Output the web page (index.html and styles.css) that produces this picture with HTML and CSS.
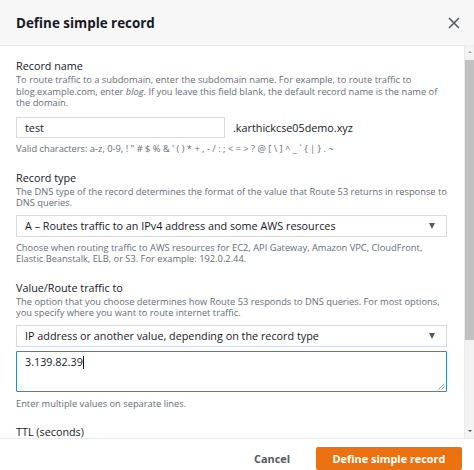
FILE: index.html
```html
<!DOCTYPE html>
<html lang="en">
<head>
    <meta charset="UTF-8">
    <title>Define simple record</title>
    <link rel="stylesheet" href="styles.css">
</head>
<body>
    <div class="modal">
        <div class="modal-header">
            <h2>Define simple record</h2>
            <span class="close">
                <svg width="12" height="12" viewBox="0 0 12 12"><path d="M1 1 L11 11 M11 1 L1 11" stroke="#545b64" stroke-width="1.6" fill="none"/></svg>
            </span>
        </div>

        <div class="modal-body">
            <div class="content">
                <div class="field">
                    <div class="label">Record name</div>
                    <div class="desc">To route traffic to a subdomain, enter the subdomain name. For example, to route traffic to blog.example.com, enter <i>blog</i>. If you leave this field blank, the default record name is the name of the domain.</div>
                    <div class="name-row">
                        <div class="input">test</div>
                        <span class="suffix">.karthickcse05demo.xyz</span>
                    </div>
                    <div class="hint">Valid characters: a-z, 0-9, ! " # $ % &amp; ' ( ) * + , - / : ; &lt; = &gt; ? @ [ \ ] ^ _ ` { | } . ~</div>
                </div>

                <div class="field">
                    <div class="label">Record type</div>
                    <div class="desc">The DNS type of the record determines the format of the value that Route 53 returns in response to DNS queries.</div>
                    <div class="select">
                        <span>A – Routes traffic to an IPv4 address and some AWS resources</span>
                        <span class="caret"></span>
                    </div>
                    <div class="hint">Choose when routing traffic to AWS resources for EC2, API Gateway, Amazon VPC, CloudFront, Elastic Beanstalk, ELB, or S3. For example: 192.0.2.44.</div>
                </div>

                <div class="field field-value">
                    <div class="label">Value/Route traffic to</div>
                    <div class="desc">The option that you choose determines how Route 53 responds to DNS queries. For most options, you specify where you want to route internet traffic.</div>
                    <div class="select">
                        <span>IP address or another value, depending on the record type</span>
                        <span class="caret"></span>
                    </div>
                    <div class="textarea">3.139.82.39<span class="cursor"></span>
                        <svg class="grip" width="7" height="7" viewBox="0 0 7 7"><path d="M6.5 0.5 L0.5 6.5 M6.5 3.5 L3.5 6.5" stroke="#9a9a9a" stroke-width="0.9"/></svg>
                    </div>
                    <div class="hint">Enter multiple values on separate lines.</div>
                </div>

                <div class="field">
                    <div class="label">TTL (seconds)</div>
                </div>
            </div>
            <div class="scrollbar">
                <span class="arrow up"></span>
                <div class="thumb"></div>
                <span class="arrow down"></span>
            </div>
        </div>

        <div class="modal-footer">
            <button class="link-btn">Cancel</button>
            <button class="primary-btn">Define simple record</button>
        </div>
    </div>
</body>
</html>
```

FILE: styles.css
```css
body {
    margin: 0;
    font-family: "Open Sans", Arial, sans-serif;
    background-color: #ffffff;
    color: #16191f;
}

.modal {
    width: 474px;
    height: 470px;
    overflow: hidden;
    display: flex;
    flex-direction: column;
}

/* Header */
.modal-header {
    height: 45px;
    flex-shrink: 0;
    background-color: #f7f7f7;
    border-bottom: 1px solid #ececec;
    display: flex;
    align-items: center;
    justify-content: space-between;
    padding: 0 14px 0 16px;
}

.modal-header h2 {
    margin: 0;
    font-size: 13.4px;
    font-weight: 700;
    margin-top: 1px;
}

.close {
    display: flex;
    margin-top: 1px;
}

/* Body */
.modal-body {
    height: 392px;
    flex-shrink: 0;
    display: flex;
    overflow: hidden;
}

.content {
    flex: 1;
    padding: 12px 17px 0 16px;
}

.field {
    margin-bottom: 16px;
}

.field-value {
    margin-bottom: 15px;
}

.label {
    font-size: 10.8px;
    line-height: 15px;
}

.desc {
    font-size: 9.3px;
    line-height: 11.5px;
    color: #656d76;
    margin-top: 1px;
}

.hint {
    font-size: 9.3px;
    line-height: 11px;
    color: #656d76;
    margin-top: 5px;
}

.field-value .hint {
    margin-top: 6px;
}

.name-row {
    display: flex;
    align-items: center;
    margin-top: 8px;
}

.input {
    width: 191px;
    height: 19px;
    line-height: 19px;
    border: 1px solid #d5dbdb;
    padding: 0 8px;
    font-size: 10.8px;
}

.suffix {
    font-size: 10.8px;
    margin-left: 8px;
}

.select {
    height: 20px;
    border: 1px solid #d5dbdb;
    display: flex;
    align-items: center;
    justify-content: space-between;
    padding: 0 11px 0 8px;
    font-size: 10.8px;
    margin-top: 6px;
}

.caret {
    width: 0;
    height: 0;
    border-left: 3.5px solid transparent;
    border-right: 3.5px solid transparent;
    border-top: 6px solid #545b64;
}

.textarea {
    position: relative;
    height: 37px;
    border: 1px solid #00a1c9;
    border-radius: 1px;
    margin-top: 4px;
    padding: 2px 8px 0;
    font-size: 10.8px;
    line-height: 16px;
}

.cursor {
    display: inline-block;
    width: 1px;
    height: 13px;
    background: #16191f;
    vertical-align: middle;
}

.grip {
    position: absolute;
    right: 1px;
    bottom: 1px;
}

/* Scrollbar */
.scrollbar {
    width: 9px;
    background-color: #f3f3f3;
    border-left: 1px solid #ebebeb;
    display: flex;
    flex-direction: column;
    align-items: center;
}

.arrow {
    width: 0;
    height: 0;
    border-left: 2.5px solid transparent;
    border-right: 2.5px solid transparent;
}

.arrow.up {
    border-bottom: 2.5px solid #a3a3a3;
    margin: 5px 0 7px;
}

.thumb {
    width: 9px;
    height: 280px;
    background-color: #c1c1c1;
}

.arrow.down {
    border-top: 2.5px solid #505050;
    margin: auto 0 6px;
}

/* Footer */
.modal-footer {
    flex: 1;
    border-top: 1px solid #eaeded;
    display: flex;
    justify-content: flex-end;
    align-items: flex-start;
    padding: 8px 12px 0 0;
    gap: 26px;
}

button {
    font-family: inherit;
    font-size: 10.9px;
    font-weight: 700;
    border: none;
    cursor: pointer;
}

.link-btn {
    background: none;
    color: #545b64;
    height: 22px;
    padding: 0;
}

.primary-btn {
    background-color: #ec7211;
    color: #ffffff;
    height: 23px;
    width: 146px;
    padding: 0;
    border-radius: 2px;
}
```
